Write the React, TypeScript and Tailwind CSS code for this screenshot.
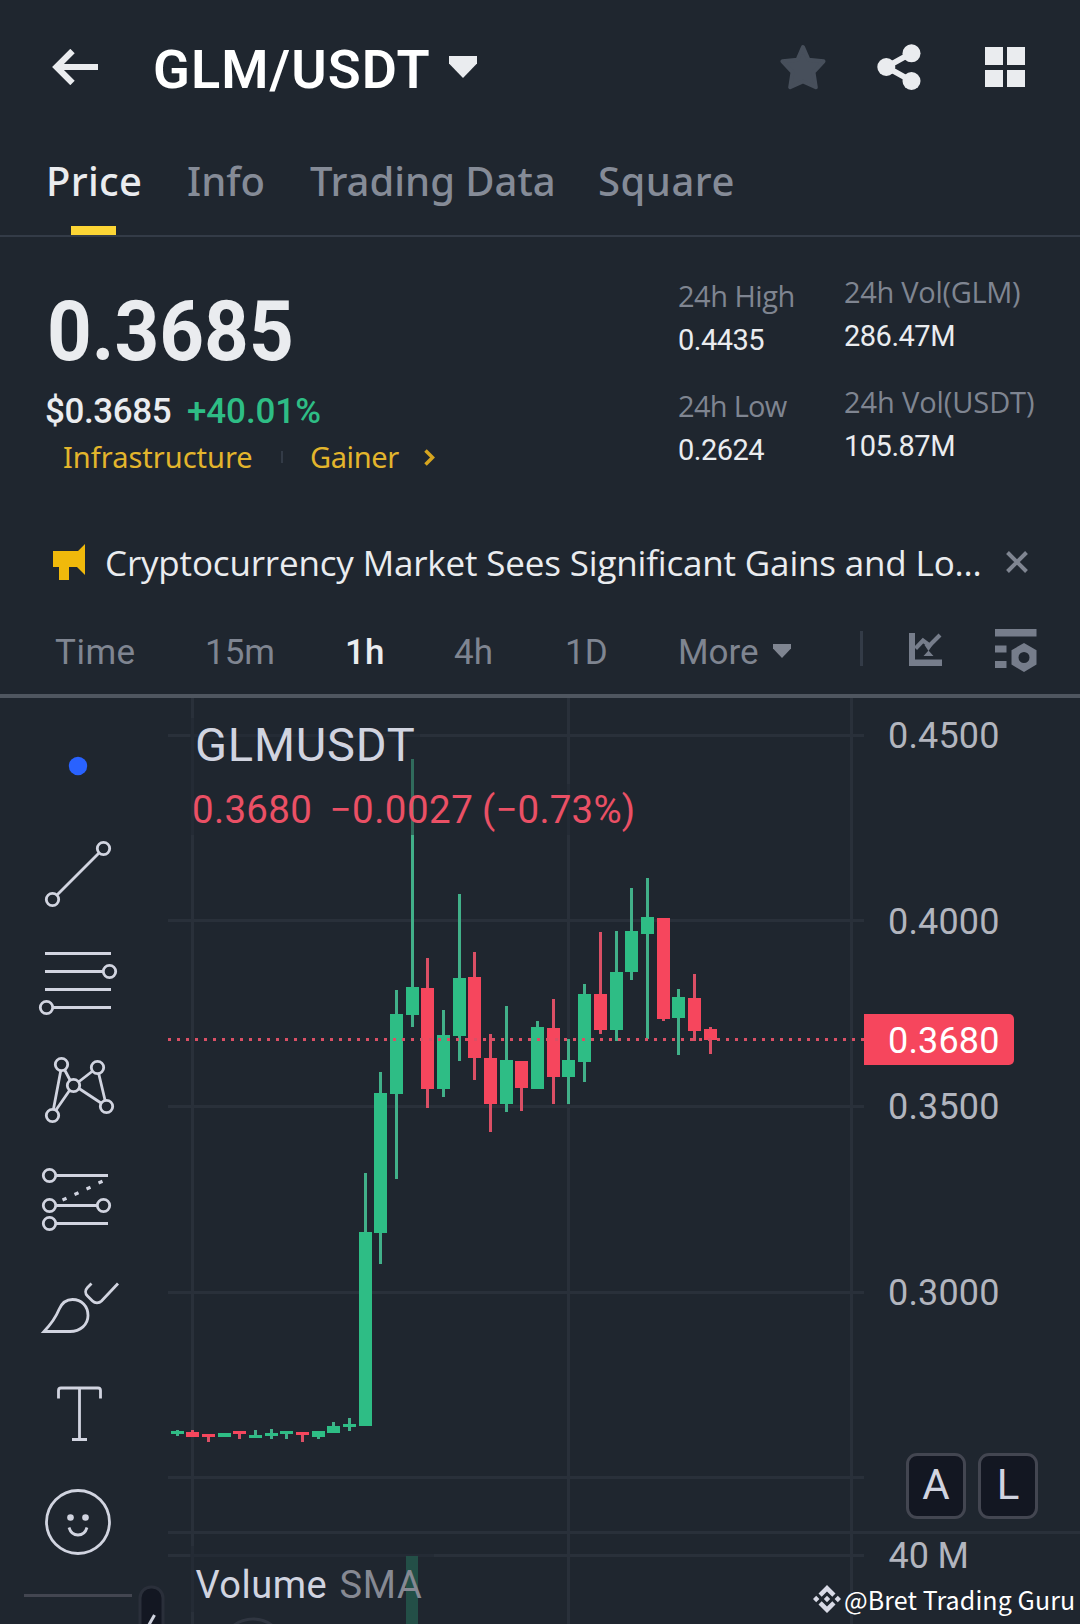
import type { ReactNode } from "react";

const UP = "#2ebd85";
const DOWN = "#f6465d";
const UP_WICK = "#41b089";
const DOWN_WICK = "#da4f65";

type Candle = [x: number, up: 0 | 1, top: number, bottom: number, high: number, low: number];

const candles: Candle[] = [
  [177.5, 1, 1431, 1434, 1430, 1436],
  [192.5, 0, 1432, 1437, 1430, 1437],
  [208.5, 0, 1434, 1437, 1434, 1442],
  [224.5, 1, 1433, 1437, 1433, 1437],
  [239.5, 0, 1431, 1434, 1431, 1439],
  [255.5, 1, 1435, 1438, 1430, 1438],
  [271.5, 1, 1433, 1436, 1429, 1439],
  [286.5, 1, 1431, 1434, 1431, 1439],
  [302.5, 0, 1432, 1435, 1432, 1442],
  [318.5, 1, 1431, 1437, 1431, 1439],
  [333.5, 1, 1426, 1433, 1422, 1433],
  [349.5, 1, 1424, 1427, 1418, 1431],
  [365.5, 1, 1232, 1426, 1173, 1426],
  [380.5, 1, 1093, 1233, 1072, 1264],
  [396.5, 1, 1014, 1094, 990, 1179],
  [412.5, 1, 987, 1015, 759, 1027],
  [427.5, 0, 988, 1089, 958, 1108],
  [443.5, 1, 1035, 1089, 1010, 1097],
  [459.5, 1, 978, 1036, 894, 1061],
  [474.5, 0, 977, 1058, 952, 1080],
  [490.5, 0, 1058, 1104, 1034, 1132],
  [506.5, 1, 1060, 1104, 1006, 1112],
  [521.5, 0, 1061, 1088, 1061, 1111],
  [537.5, 1, 1027, 1089, 1021, 1089],
  [553.5, 0, 1028, 1077, 999, 1104],
  [568.5, 1, 1060, 1077, 1039, 1104],
  [584.5, 1, 994, 1062, 984, 1082],
  [600.5, 0, 994, 1030, 932, 1034],
  [616.5, 1, 972, 1030, 931, 1041],
  [631.5, 1, 931, 972, 888, 980],
  [647.5, 1, 917, 934, 878, 1039],
  [663.5, 0, 918, 1019, 918, 1021],
  [678.5, 1, 997, 1018, 989, 1055],
  [694.5, 0, 998, 1031, 974, 1041],
  [710.5, 0, 1029, 1040, 1027, 1054],
];

function Header() {
  return (
    <header className="flex h-[134px] items-center pl-[52px] pr-[55px]">
      <svg width="46" height="36" viewBox="0 0 46 36" fill="none" stroke="#eaecef" strokeWidth="6.2">
        <path d="M46 18H5M20.5 2 4.5 18l16 16" />
      </svg>
      <h1 className="ml-[55px] w-[296px] whitespace-nowrap pt-[6px] text-[54px] font-semibold leading-[60px] tracking-[1.1px] text-white">
        GLM/USDT
      </h1>
      <svg width="28" height="22" viewBox="0 0 28 22" fill="#eaecef">
        <path d="M0 0h28v7.500L14 22 0 7.500z" />
      </svg>
      <div className="ml-auto flex items-center">
        <svg width="46" height="46" viewBox="0 0 46 46" fill="#474f5b" stroke="#474f5b" strokeWidth="4" strokeLinejoin="round">
          <path d="M23 3l5.500 12.800L43.500 17.300 33.500 28.200 35.800 43.200 23 37.500 10.200 43.200 12.500 28.200 2.500 17.300l15-1.500z" />
        </svg>
        <svg className="ml-[51px]" width="44" height="46" viewBox="0 0 44 46" fill="#eaecef">
          <path d="M34.500 9 9.500 23l25 14" fill="none" stroke="#eaecef" strokeWidth="5.800" />
          <circle cx="34.500" cy="9.300" r="9" />
          <circle cx="9.300" cy="23" r="9" />
          <circle cx="34.500" cy="37" r="9" />
        </svg>
        <div className="ml-[64px] grid h-10 w-10 grid-cols-2 gap-x-[4.500px] gap-y-[5px]">
          {[0, 1, 2, 3].map((i) => (
            <span key={i} className="bg-[#eaecef]" />
          ))}
        </div>
      </div>
    </header>
  );
}

function Tabs() {
  return (
    <nav className="h-[103px] border-b-2 border-[#333b47] font-['Noto_Sans'] text-[40px] font-medium text-[#858b97]">
      <div className="flex h-[92px] items-center whitespace-nowrap pl-[46px] pt-[2px] leading-[60px]">
        <span className="w-[141px] tracking-[0.3px] text-[#eaecef]">Price</span>
        <span className="w-[123px]">Info</span>
        <span className="w-[288px]">Trading Data</span>
        <span className="tracking-[0.5px]">Square</span>
      </div>
      <div className="ml-[71px] h-[9px] w-[45px] bg-[#fcd535]" />
    </nav>
  );
}

function Stat({ label, value, labelClass }: { label: string; value: string; labelClass: string }) {
  return (
    <div className="whitespace-nowrap leading-[44px]">
      <div className={`font-['Open_Sans'] text-[29px] text-[#7f8591] ${labelClass}`}>{label}</div>
      <div className="text-[29px] font-[450] tracking-[-0.5px] text-[#eaecef]">{value}</div>
    </div>
  );
}

function Summary() {
  return (
    <section className="flex h-[295px]">
      <div className="w-[678px] whitespace-nowrap pt-[53px]">
        <div className="ml-[47px] origin-left scale-x-[0.93] text-[84px] font-bold leading-[84px] text-[#eaecef]">0.3685</div>
        <div className="mt-[14px] flex pl-[45px] text-[35px] font-medium leading-[48px] tracking-[-0.4px]">
          <span className="w-[142px] text-[#eaecef]">$0.3685</span>
          <span className="tracking-[-0.1px] text-[#2ebd85]">+40.01%</span>
        </div>
        <div className="mt-[1px] flex h-10 items-center pl-[63px] font-['Noto_Sans'] text-[29px] leading-[40px] text-[#e3b52c]">
          <span className="w-[218px]">Infrastructure</span>
          <span className="h-[12px] w-[2px] bg-[#333b47]" />
          <span className="ml-[27px] w-[114px] tracking-[-0.400px]">Gainer</span>
          <svg width="12" height="17" viewBox="0 0 12 17" fill="none" stroke="#d6a51f" strokeWidth="3.500">
            <path d="M1.500 1.500l7 7-7 7" />
          </svg>
        </div>
      </div>
      <div className="flex w-[166px] flex-col gap-[22px] pt-[37px]">
        <Stat label="24h High" value="0.4435" labelClass="tracking-[-0.5px]" />
        <Stat label="24h Low" value="0.2624" labelClass="tracking-[-0.7px]" />
      </div>
      <div className="flex flex-col gap-[22px] pt-[33px]">
        <Stat label="24h Vol(GLM)" value="286.47M" labelClass="tracking-[-0.3px]" />
        <Stat label="24h Vol(USDT)" value="105.87M" labelClass="tracking-[-0.1px]" />
      </div>
    </section>
  );
}

function News() {
  return (
    <div className="flex h-[60px] items-center pl-[53px]">
      <svg width="32" height="36" viewBox="0 0 32 36" fill="#f0b90b">
        <path d="M0 7h25l7-7v31l-8-8h-8v13H6V23H0z" />
      </svg>
      <p className="ml-[20px] w-[901px] whitespace-nowrap pt-[2px] font-['Open_Sans'] text-[35px] leading-[58px] tracking-[-0.17px] text-[#eaecef]">
        Cryptocurrency Market Sees Significant Gains and Lo...
      </p>
      <svg width="22" height="22" viewBox="0 0 22 22" stroke="#7f8591" strokeWidth="4">
        <path d="M1.500 1.500l19 19M20.500 1.500l-19 19" />
      </svg>
    </div>
  );
}

function Intervals() {
  return (
    <div className="flex h-[102px] items-center whitespace-nowrap pl-[55px] pt-[20px] text-[35px] leading-[60px] text-[#7f8591]">
      <span className="w-[150px] tracking-[0.5px]">Time</span>
      <span className="w-[140px]">15m</span>
      <span className="w-[109px] font-medium text-[#eaecef]">1h</span>
      <span className="w-[111px]">4h</span>
      <span className="w-[113px]">1D</span>
      <span className="w-[95px]">More</span>
      <svg className="mb-[5px]" width="18" height="14" viewBox="0 0 18 14" fill="#7f8591">
        <path d="M0 0h18v4.500L9 14 0 4.500z" />
      </svg>
      <span className="mb-[9px] ml-[69px] h-[35px] w-[3px] bg-[#333b47]" />
      <svg className="mb-[7px] ml-[46px]" width="33" height="33" viewBox="0 0 33 33" fill="#767d8b">
        <path d="M0 0h6v26.500h27V33H0z" />
        <path d="M6.500 15.500 14 7.500l6.500 5L31 2" fill="none" stroke="#767d8b" strokeWidth="4.200" />
        <path d="M14.500 23l5-5.500 5 5.500zM15.500 12h8l-4 6z" />
      </svg>
      <svg className="mb-[5px] ml-[53px]" width="42" height="43" viewBox="0 0 42 43" fill="#767d8b">
        <path d="M0 0h41.500v7.500H0zM0 16.500h11.500v7H0zM0 32h11.500v7H0z" />
        <path fillRule="evenodd" d="M29 14l12.500 7.200v14.400L29 43l-12.500-7.400V21.200zM29 23a5.500 5.500 0 1 0 0 11 5.500 5.500 0 0 0 0-11z" />
      </svg>
    </div>
  );
}

function Tool({ y, h, children }: { y: number; h: number; children: ReactNode }) {
  return (
    <svg className="block" width="168" height={h} viewBox={`0 ${y} 168 ${h}`} fill="none" stroke="#d1d4e0" strokeWidth="2.800">
      {children}
    </svg>
  );
}

function Toolbar() {
  return (
    <aside className="flex w-[168px] flex-col">
      <Tool y={698} h={114}>
        <circle cx="78" cy="766" r="9.200" fill="#2962ff" stroke="none" />
      </Tool>
      <Tool y={812} h={116}>
        <path d="M57 895 99 853" />
        <circle cx="103.500" cy="848.500" r="6.200" />
        <circle cx="52.500" cy="899.500" r="6.200" />
      </Tool>
      <Tool y={928} h={108}>
        <path d="M45 953.500h66M45 971.500h58M45 989.500h66M53 1007.500h58" />
        <circle cx="109.500" cy="971.500" r="6.200" />
        <circle cx="46.500" cy="1007.500" r="6.200" />
      </Tool>
      <Tool y={1036} h={108}>
        <path d="M60.700 1071 53.500 1109M64.700 1070 70 1080M78.500 1082 92 1071.500M98.800 1074 105 1100M79 1088.500 101 1103M69.500 1090.500 56 1110" />
        <circle cx="61.500" cy="1064.500" r="6.200" />
        <circle cx="97.500" cy="1067.500" r="6.200" />
        <circle cx="73.500" cy="1085.500" r="6.200" />
        <circle cx="52.500" cy="1115.500" r="6.200" />
        <circle cx="106.500" cy="1106.500" r="6.200" />
      </Tool>
      <Tool y={1144} h={112}>
        <path d="M56 1175.500h52M56 1205.500h41M56 1223.500h52" />
        <path d="M62.500 1200l4-1.700M74.500 1194.500l4-1.700M86.500 1189l4-1.700M98.500 1183l4-1.700" strokeWidth="3.200" />
        <circle cx="49.500" cy="1175.500" r="6.200" />
        <circle cx="49.500" cy="1205.500" r="6.200" />
        <circle cx="103.500" cy="1205.500" r="6.200" />
        <circle cx="49.500" cy="1223.500" r="6.200" />
      </Tool>
      <Tool y={1256} h={104}>
        <path d="M44 1331.500C52 1323 56 1317 59 1309.500 62 1302.500 66 1299.500 72.500 1299.500c9 0 15.500 6.500 15.500 16 0 9-7.500 16-18 16z" />
        <path d="M91.500 1283.500l-4 4c-2.500 2.500-2.500 6 0 8.500l5 5c2.500 2.500 6.500 2.500 9 0L118 1283.500" />
      </Tool>
      <Tool y={1360} h={108}>
        <path d="M58.500 1398.500v-8q0-2.500 2.500-2.500h37q2.500 0 2.500 2.500v8M79.500 1388v51.500M72 1439.500h15" />
      </Tool>
      <Tool y={1468} h={108}>
        <circle cx="78" cy="1522" r="31.500" />
        <circle cx="70.500" cy="1517.500" r="3.300" fill="#d1d4e0" stroke="none" />
        <circle cx="85.500" cy="1517.500" r="3.300" fill="#d1d4e0" stroke="none" />
        <path d="M69 1527.500c1.500 5 5 7.500 9 7.500s7.500-2.500 9-7.500" />
      </Tool>
      <Tool y={1576} h={48}>
        <path d="M24 1595.500h108" stroke="#434651" strokeWidth="3" />
        <rect x="140" y="1587" width="23" height="60" rx="11" fill="#131722" stroke="#2a2f3a" strokeWidth="3" />
        <path d="M154.500 1615l-9 16" strokeWidth="3" />
      </Tool>
    </aside>
  );
}

function Chart() {
  return (
    <svg
      className="block"
      width="912"
      height="926"
      viewBox="168 698 912 926"
      fontFamily="Roboto, sans-serif"
    >
      <g stroke="#29303a" strokeWidth="3">
        <path d="M192.500 698v926M568.500 698v926M851.500 698v926" />
        <path d="M168 735.500h696M168 920.500h696M168 1106.500h696M168 1292.500h696M168 1477.500h696M168 1532.500h912M168 1555.500h696" />
      </g>
      <g>
        {candles.map(([x, up, top, bottom, high, low]) => (
          <g key={x}>
            <rect x={x - 1.5} y={high} width="3" height={low - high} fill={up ? UP_WICK : DOWN_WICK} />
            <rect x={x - 6.5} y={top} width="13" height={bottom - top} fill={up ? UP : DOWN} />
          </g>
        ))}
      </g>
      <path d="M168 1039.500h696" stroke={DOWN_WICK} strokeWidth="3" strokeDasharray="3 6" />
      <g fill="#1f262f" fillOpacity="0.5">
        <rect x="190" y="718" width="230" height="66" />
        <rect x="190" y="784" width="450" height="51" />
        <rect x="190" y="1546" width="244" height="66" />
      </g>
      <circle cx="253" cy="1651" r="32" fill="none" stroke="#303641" strokeWidth="3" />
      <rect x="406" y="1556" width="12" height="68" fill="#234f47" />
      <text x="195" y="761" fontSize="47" letterSpacing="0.800" fill="#d1d4e0">GLMUSDT</text>
      <g fontSize="38.500" fill="#ea5065">
        <text x="192" y="822.500" letterSpacing="0.300">0.3680</text>
        <text x="329.500" y="822.500" letterSpacing="0.500">−0.0027</text>
        <text x="482" y="822.500" letterSpacing="0.200">(−0.73%)</text>
      </g>
      <text x="195.500" y="1597.500" fontSize="38" letterSpacing="0.500" fill="#d1d4e0">Volume</text>
      <text x="339.500" y="1597.500" fontSize="38" letterSpacing="0.700" fill="#868993">SMA</text>
      <g fontSize="36" letterSpacing="0.150" fill="#b2b5be">
        <text x="888" y="748">0.4500</text>
        <text x="888" y="933.500">0.4000</text>
        <text x="888" y="1118.500">0.3500</text>
        <text x="888" y="1304.500">0.3000</text>
        <text x="888.500" y="1567.500" letterSpacing="-0.1">40 M</text>
      </g>
      <path d="M864 1014h145a5 5 0 0 1 5 5v41a5 5 0 0 1-5 5H864z" fill={DOWN} />
      <text x="888" y="1052.500" fontSize="36" letterSpacing="0.150" fill="#ffffff">0.3680</text>
    </svg>
  );
}

function ScaleButtons() {
  return (
    <div className="absolute right-[42px] top-[755px] flex gap-[12px] text-[42px] leading-[58px] text-[#d1d4e0]">
      {["A", "L"].map((t) => (
        <button key={t} className="flex h-[66px] w-[60px] justify-center rounded-[11px] border-[3px] border-[#434651] bg-[#131722]">
          {t}
        </button>
      ))}
    </div>
  );
}

function Watermark() {
  return (
    <div className="absolute bottom-[7px] left-[813px] flex h-[36px] items-center gap-[3px]">
      <svg width="28" height="28" viewBox="0 0 28 28" fill="#d8dae6">
        <path d="M14 0l8.500 8.500-3.200 3.200L14 6.400l-5.300 5.300-3.200-3.200zM14 28l8.500-8.500-3.200-3.200L14 21.600l-5.300-5.300-3.200 3.200zM14 10.800l3.200 3.200-3.200 3.200-3.200-3.200zM3.200 10.800 6.400 14l-3.200 3.200L0 14zM24.800 10.800 28 14l-3.200 3.200-3.200-3.200z" />
      </svg>
      <span className="whitespace-nowrap font-['Noto_Sans_CJK_SC'] text-[25px] font-normal leading-[36px] tracking-[0.1px] text-white">
        @Bret Trading Guru
      </span>
    </div>
  );
}

export default function App() {
  return (
    <main className="h-[1624px] w-[1080px] overflow-hidden bg-[#1f262f] font-['Roboto',sans-serif]">
      <Header />
      <Tabs />
      <Summary />
      <News />
      <Intervals />
      <div className="h-1 bg-[#4f5660]" />
      <div className="relative flex h-[926px]">
        <Toolbar />
        <Chart />
        <ScaleButtons />
        <Watermark />
      </div>
    </main>
  );
}
